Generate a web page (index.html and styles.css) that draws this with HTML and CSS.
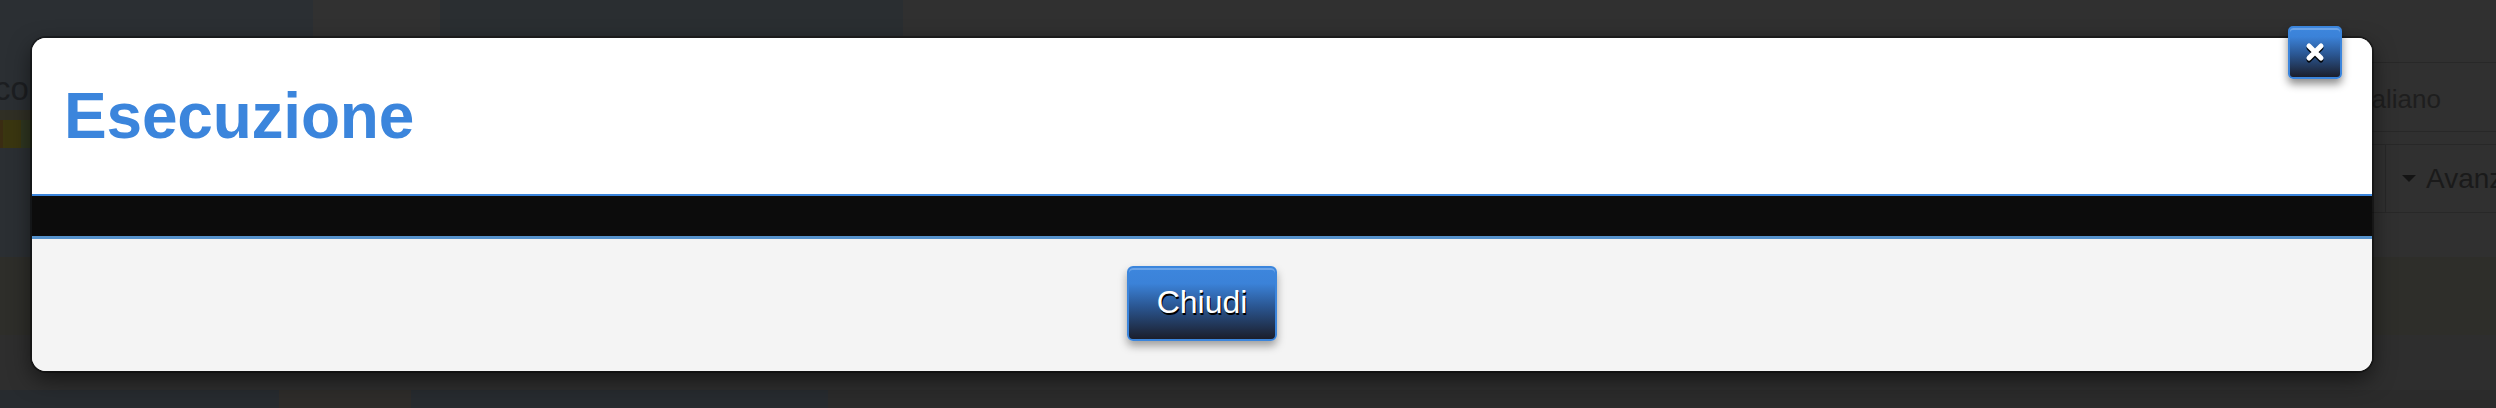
FILE: index.html
```html
<!DOCTYPE html>
<html lang="it">
<head>
<meta charset="utf-8">
<title>Esecuzione</title>
<link rel="stylesheet" href="styles.css">
</head>
<body>
<div class="page">
  <div class="topbar">
    <div class="seg seg-a"></div>
    <div class="seg seg-b"></div>
    <div class="seg seg-c"></div>
    <div class="seg seg-d"></div>
  </div>
  <div class="main">
    <div class="sidebar">
      <div class="side-title"><span class="side-word">Elenco</span></div>
      <div class="side-tag">
        <div class="tag-top"></div>
        <div class="tag-row">
          <div class="tag-p tag-p1"></div>
          <div class="tag-p tag-p2"></div>
          <div class="tag-p tag-p3"></div>
        </div>
      </div>
    </div>
    <div class="center"></div>
    <div class="tools">
      <div class="lang"><span class="lang-text">Italiano</span></div>
      <div class="adv">
        <div class="adv-left"></div>
        <div class="adv-right"><span class="caret"></span><span class="adv-text">Avanzate</span></div>
      </div>
    </div>
  </div>
  <div class="band"></div>
  <div class="lower"></div>
  <div class="bottom">
    <div class="bseg bseg-a"></div>
    <div class="bseg bseg-b"></div>
    <div class="bseg bseg-c"></div>
    <div class="bseg bseg-d"></div>
  </div>
</div>

<div class="modal">
  <div class="modal-header">
    <h1 class="modal-title">Esecuzione</h1>
  </div>
  <div class="modal-body"></div>
  <div class="modal-footer">
    <button class="btn" type="button">Chiudi</button>
  </div>
</div>

<button class="close-btn" type="button" aria-label="Chiudi">
  <svg class="close-icon" width="24" height="24" viewBox="0 0 24 24">
    <path d="M6 6 L18 18 M18 6 L6 18" stroke="#ffffff" stroke-width="5" stroke-linecap="round" fill="none"/>
  </svg>
</button>
</body>
</html>
```

FILE: styles.css
```css
html, body {
  margin: 0;
  padding: 0;
}
body {
  width: 2496px;
  height: 408px;
  overflow: hidden;
  background: #303030;
  font-family: "Liberation Sans", Arial, sans-serif;
  position: relative;
}

/* dimmed background page */
.page {
  display: flex;
  flex-direction: column;
  width: 2496px;
  height: 408px;
}
.topbar {
  display: flex;
  height: 36px;
  flex: none;
}
.seg { height: 100%; }
.seg-a { width: 313px; background: #2b2f33; }
.seg-b { width: 127px; background: #313131; }
.seg-c { width: 463px; background: #2a2e31; }
.seg-d { flex: 1; background: #303030; }

.main {
  display: flex;
  height: 221px;
  flex: none;
}
.sidebar {
  width: 313px;
  background: #2b2f33;
  display: flex;
  flex-direction: column;
  padding-top: 32px;
  box-sizing: border-box;
}
.side-title {
  height: 42px;
  font-size: 33px;
  line-height: 42px;
  color: #1c1e21;
  white-space: nowrap;
  overflow: hidden;
}
.side-word {
  margin-left: -72px;
}
.side-tag {
  width: 60px;
  display: flex;
  flex-direction: column;
}
.tag-top {
  height: 10px;
  background: #302f25;
}
.tag-row {
  display: flex;
  height: 28px;
}
.tag-p { height: 100%; }
.tag-p1 { width: 3px; background: #3a2c12; }
.tag-p2 { width: 18px; background: #3a3610; }
.tag-p3 { flex: 1; background: #2f3620; }

.center {
  flex: 1;
  background: #303030;
}
.tools {
  width: 124px;
  background: #303030;
  display: flex;
  flex-direction: column;
  padding-top: 26px;
  box-sizing: border-box;
}
.lang {
  height: 70px;
  border-top: 1px solid #282828;
  border-bottom: 1px solid #282828;
  box-sizing: border-box;
  display: flex;
  align-items: center;
  overflow: hidden;
}
.lang-text {
  font-size: 26px;
  color: #1e1e1e;
  margin-left: -15px;
  padding-top: 4px;
}
.adv {
  margin-top: 12px;
  height: 69px;
  border-top: 1px solid #282828;
  border-bottom: 1px solid #282828;
  display: flex;
  box-sizing: border-box;
}
.adv-left {
  width: 13px;
  border-right: 1px solid #282828;
}
.adv-right {
  flex: 1;
  display: flex;
  align-items: center;
  padding-left: 16px;
  overflow: hidden;
  white-space: nowrap;
}
.caret {
  width: 0;
  height: 0;
  border-left: 7px solid transparent;
  border-right: 7px solid transparent;
  border-top: 7px solid #141414;
  margin-right: 10px;
}
.adv-text {
  font-size: 28px;
  color: #1a1a1a;
}
.band {
  height: 78px;
  background: #2e2e2a;
  flex: none;
}
.lower {
  height: 55px;
  background: #2e2e2e;
  flex: none;
}
.bottom {
  flex: 1;
  display: flex;
}
.bseg-a { width: 279px; background: #272b2f; }
.bseg-b { width: 132px; background: #2e2c2a; }
.bseg-c { width: 417px; background: #272b2f; }
.bseg-d { flex: 1; background: #2b2b2b; }

/* modal dialog (overlay) */
.modal {
  position: absolute;
  left: 32px;
  top: 38px;
  width: 2340px;
  height: 333px;
  border-radius: 14px;
  overflow: hidden;
  display: flex;
  flex-direction: column;
  background: #f4f4f4;
  box-shadow: 0 0 0 2px rgba(0, 0, 0, 0.35), 0 8px 22px rgba(0, 0, 0, 0.55);
}
.modal-header {
  height: 156px;
  background: #ffffff;
  display: flex;
  align-items: center;
  padding-left: 32px;
  flex: none;
}
.modal-title {
  margin: 0;
  font-family: "Liberation Sans", Arial, Helvetica, sans-serif;
  font-weight: bold;
  font-size: 64px;
  color: #3b85dc;
  letter-spacing: -0.2px;
}
.modal-body {
  height: 40px;
  flex: none;
  background: #0c0c0c;
  border-top: 2px solid #3b85dc;
  border-bottom: 3px solid #5592cc;
}
.modal-footer {
  flex: 1;
  display: flex;
  align-items: center;
  justify-content: center;
  background: #f4f4f4;
  padding-bottom: 3px;
}

.btn {
  width: 150px;
  height: 75px;
  border: 2px solid #3b85dc;
  border-radius: 6px;
  background: linear-gradient(to bottom, #3d86dd 0%, #3b82d8 22%, #2a5590 55%, #1b1e2b 100%);
  box-shadow: inset 0 2px 0 rgba(140, 185, 240, 0.6), 0 5px 8px rgba(0, 0, 0, 0.35);
  color: #ffffff;
  font-family: "Liberation Sans", Arial, Helvetica, sans-serif;
  font-size: 32px;
  text-shadow: 1px 2px 0 #000000;
  padding: 0;
  padding-bottom: 2px;
}

.close-btn {
  position: absolute;
  left: 2288px;
  top: 26px;
  width: 54px;
  height: 53px;
  padding: 0;
  border: 2px solid #3b85dc;
  border-radius: 5px;
  background: linear-gradient(to bottom, #3d86dd 0%, #3b82d8 18%, #2a5590 55%, #1b1e2b 100%);
  box-shadow: inset 0 2px 0 rgba(140, 185, 240, 0.6), 0 5px 8px rgba(0, 0, 0, 0.45);
  display: flex;
  align-items: center;
  justify-content: center;
}
.close-icon {
  display: block;
  filter: drop-shadow(0 2px 0 rgba(0, 0, 0, 0.9));
  margin-bottom: 2px;
}
```
